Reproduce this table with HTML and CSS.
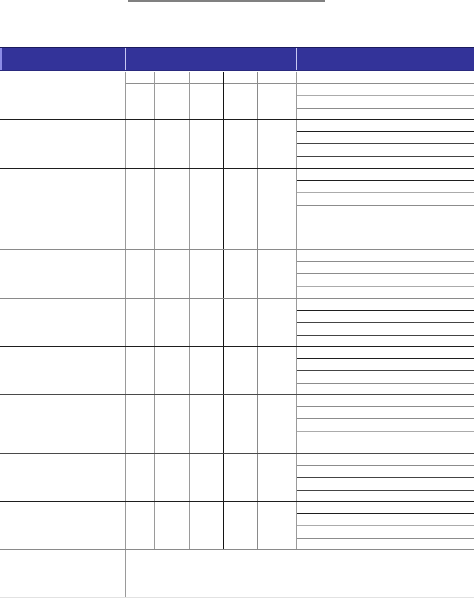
FILE: index.html
```html
<!DOCTYPE html>
<html lang="en">
<head>
<meta charset="utf-8">
<title>Form</title>
<link rel="stylesheet" href="styles.css">
</head>
<body>
<div class="topbar"></div>
<div class="sheet">
  <div class="head">
    <div class="hc first"></div>
    <div class="hc sep"></div>
    <div class="hc sep"></div>
  </div>

  <div class="row r1">
    <div class="c name"></div>
    <div class="c sub"><div class="split"></div></div>
    <div class="c sub"><div class="split"></div></div>
    <div class="c sub"><div class="split"></div></div>
    <div class="c sub dk"><div class="split"></div></div>
    <div class="c sub md"><div class="split"></div></div>
    <div class="c notes"><div class="ln l2"></div><div class="ln l3"></div><div class="ln l2"></div></div>
  </div>

  <div class="row r2 b-dk">
    <div class="c name"></div>
    <div class="c sub"></div><div class="c sub"></div><div class="c sub"></div><div class="c sub dk"></div><div class="c sub md"></div>
    <div class="c notes"><div class="ln l0"></div><div class="ln l1"></div><div class="ln l1"></div></div>
  </div>

  <div class="row r3 b-dk">
    <div class="c name"></div>
    <div class="c sub"></div><div class="c sub"></div><div class="c sub"></div><div class="c sub dk"></div><div class="c sub md"></div>
    <div class="c notes"><div class="ln l0"></div><div class="ln l3"></div><div class="ln l2"></div></div>
  </div>

  <div class="row r4 b-md">
    <div class="c name"></div>
    <div class="c sub"></div><div class="c sub"></div><div class="c sub"></div><div class="c sub dk"></div><div class="c sub md"></div>
    <div class="c notes"><div class="ln l2"></div><div class="ln l2"></div><div class="ln l3"></div></div>
  </div>

  <div class="row r5 b-md">
    <div class="c name"></div>
    <div class="c sub"></div><div class="c sub"></div><div class="c sub"></div><div class="c sub dk"></div><div class="c sub md"></div>
    <div class="c notes"><div class="ln l0"></div><div class="ln l1"></div><div class="ln l1"></div></div>
  </div>

  <div class="row r6 b-dk">
    <div class="c name"></div>
    <div class="c sub"></div><div class="c sub"></div><div class="c sub"></div><div class="c sub dk"></div><div class="c sub md"></div>
    <div class="c notes"><div class="ln l0"></div><div class="ln l1"></div><div class="ln l2"></div></div>
  </div>

  <div class="row r7 b-gr">
    <div class="c name"></div>
    <div class="c sub"></div><div class="c sub"></div><div class="c sub"></div><div class="c sub dk"></div><div class="c sub md"></div>
    <div class="c notes"><div class="ln l2"></div><div class="ln l2"></div><div class="ln l3"></div></div>
  </div>

  <div class="row r8 b-gr">
    <div class="c name"></div>
    <div class="c sub"></div><div class="c sub"></div><div class="c sub"></div><div class="c sub dk"></div><div class="c sub md"></div>
    <div class="c notes"><div class="ln l2"></div><div class="ln l1"></div><div class="ln l1"></div></div>
  </div>

  <div class="row r9 b-dk">
    <div class="c name"></div>
    <div class="c sub"></div><div class="c sub"></div><div class="c sub"></div><div class="c sub dk"></div><div class="c sub md"></div>
    <div class="c notes"><div class="ln l0"></div><div class="ln l3"></div><div class="ln l2"></div></div>
  </div>

  <div class="row r10 b-md last">
    <div class="c name"></div>
    <div class="c wide"></div>
  </div>
</div>
</body>
</html>
```

FILE: styles.css
```css
html, body {
  margin: 0;
  padding: 0;
  background: #ffffff;
  font-family: "Liberation Sans", Arial, sans-serif;
}

.topbar {
  margin-left: 128px;
  width: 197px;
  height: 2px;
  background: #808080;
}

.sheet {
  margin-top: 45px;
  width: 474px;
}

.head {
  display: grid;
  grid-template-columns: 125px 171px 178px;
  height: 24px;
  box-sizing: border-box;
  border-top: 1px solid #1c1c5e;
  border-bottom: 1px solid #2a2a7e;
  background: #333399;
}

.hc {
  box-sizing: border-box;
}

.hc.first {
  border-left: 2px solid #8c8ce6;
}

.hc.sep {
  border-left: 1px solid #c8c8f2;
}

.row {
  display: grid;
  grid-template-columns: 125px 29px 35px 34px 34px 39px 178px;
  box-sizing: border-box;
}

.row.last {
  grid-template-columns: 125px 349px;
  border-bottom: 1px solid #e2e2e2;
}

.r1 { height: 48px; border-top: 1px solid transparent; }
.r2 { height: 49px; }
.r3 { height: 81px; }
.r4 { height: 49px; }
.r5 { height: 48px; }
.r6 { height: 48px; }
.r7 { height: 59px; }
.r8 { height: 48px; }
.r9 { height: 48px; }
.r10 { height: 49px; }

.b-dk { border-top: 1px solid #1e1e1e; }
.b-gr { border-top: 1px solid #4a4a4a; }
.b-md { border-top: 1px solid #8a8a8a; }

.c {
  box-sizing: border-box;
}

.sub,
.notes,
.wide {
  border-left: 1px solid #9a9a9a;
}

.sub.dk {
  border-left-color: #141414;
}

.sub.md {
  border-left-color: #8a8a8a;
}

.split {
  height: 12px;
  box-sizing: border-box;
  border-bottom: 1px solid #8e8e8e;
}

.notes {
  display: flex;
  flex-direction: column;
}

.ln {
  height: 12px;
  flex: none;
  box-sizing: border-box;
  border-bottom: 1px solid #999;
}

.ln + .ln {
  height: 12.3px;
}

.ln.l0 { border-bottom-color: #1e1e1e; }
.ln.l1 { border-bottom-color: #444444; }
.ln.l2 { border-bottom-color: #8c8c8c; }
.ln.l3 { border-bottom-color: #ababab; }
```
